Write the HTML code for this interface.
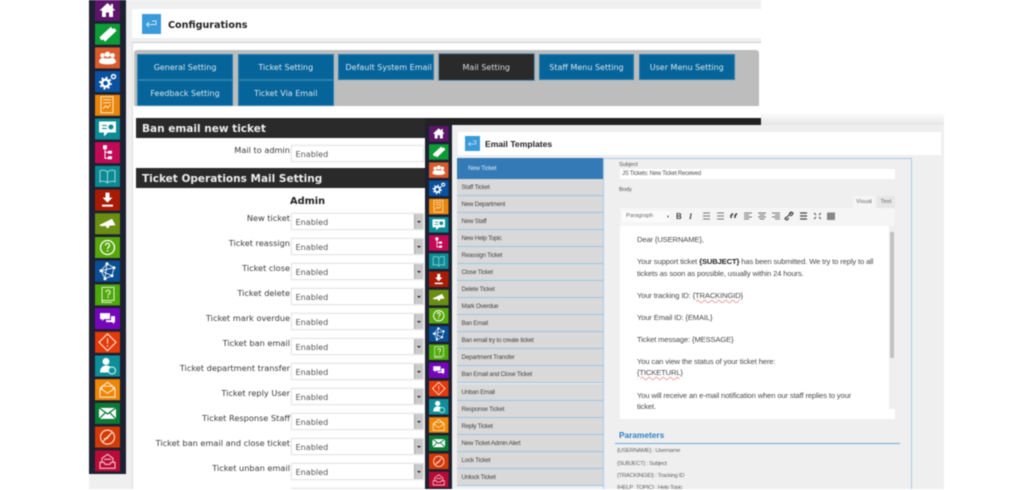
<!DOCTYPE html>
<html><head><meta charset="utf-8"><style>
html,body{margin:0;padding:0;background:#fff}
#p{position:relative;width:1024px;height:490px;overflow:hidden;background:#fff;filter:blur(.4px)}
#p div,#p span.a,#p svg.a{position:absolute}
.t{white-space:nowrap}
.v{font-family:"DejaVu Sans",sans-serif}
.l{font-family:"Liberation Sans",sans-serif}
.tab{background:#05649a;color:#d8e6ee;font:8px/27px "DejaVu Sans",sans-serif;text-align:center;height:26px;width:95.5px;box-shadow:inset 0 0 0 1px #2d7fae;white-space:nowrap;overflow:hidden}
.hd{left:136px;width:624px;height:20px;background:#2a2a2a;color:#eee;font:bold 10.5px/23px "DejaVu Sans",sans-serif;text-indent:6px;white-space:nowrap}
.lb{left:130px;width:160px;text-align:right;font:8.2px/12px "DejaVu Sans",sans-serif;color:#3a3a3a;white-space:nowrap}
.se{left:291px;width:131px;height:15px;background:#fff;border:1px solid #e6e6e6;box-shadow:0 0 1px #ddd;font:8.1px/16px "DejaVu Sans",sans-serif;color:#555;text-indent:3.5px}
.se i{position:absolute;right:0;top:0;width:8px;height:15px;background:#c9c9c9;border-left:1px solid #aaa}
.se i:after{content:"";position:absolute;left:2px;top:7px;border:2px solid transparent;border-top:2.5px solid #222}
.m{left:457px;width:146px;height:16px;background:#d9d9d9;border-bottom:1px solid #9cc4e4;font:6.2px/17.5px "Liberation Sans",sans-serif;letter-spacing:-.2px;color:#444;text-indent:4.5px;white-space:nowrap}
.e{left:637px;font:7.6px/11px "Liberation Sans",sans-serif;letter-spacing:-.13px;color:#4a4a4a;white-space:nowrap}
.q{left:617px;font:5.9px/8px "Liberation Sans",sans-serif;letter-spacing:-.3px;color:#666;white-space:nowrap}
u{text-decoration:underline wavy #e9a0a0 .4px}
</style></head><body><div id="p">
<svg width="0" height="0" style="position:absolute"><defs>
<symbol id="i0" viewBox="0 0 25 21"><path d="M12.500 3 4.500 10.500H7V17h4v-4.500h3V17h4v-6.500h2.500L18 8.200V4h-2v2.300z" fill="#fff"/></symbol>
<symbol id="i1" viewBox="0 0 25 21"><path d="M4.500 13.500 16 3l1.200 2.200 2.300-.7L21.500 7 10 18l-1.500-2.200-2.300.7z" fill="#fff"/></symbol>
<symbol id="i2" viewBox="0 0 25 21"><circle cx="7.500" cy="8" r="2.300" fill="#fff"/><circle cx="17.500" cy="8" r="2.300" fill="#fff"/><circle cx="12.500" cy="7" r="2.800" fill="#fff"/><path d="M4 15c0-3 2-4.500 3.500-4.500S10 11 12.500 11s3.500-.5 5-.5S21 12 21 15c-2 1.500-4 2-8.500 2S6 16.500 4 15z" fill="#fff"/></symbol>
<symbol id="i3" viewBox="0 0 25 21" fill="none" stroke="#fff"><circle cx="10.500" cy="12" r="3.500" stroke-width="2.500"/><circle cx="10.500" cy="12" r="5.500" stroke-width="1.800" stroke-dasharray="2 2.300"/><circle cx="18.500" cy="5.500" r="2" stroke-width="1.500"/></symbol>
<symbol id="i4" viewBox="0 0 25 21" fill="none" stroke="#ffe6c0"><path d="M6 2h12v16H6z"/><path d="M8 5h8M8 8h8M8 14l2.500-3 2 2 3-3"/></symbol>
<symbol id="i5" viewBox="0 0 25 21"><path d="M4 3h17v11h-8l-4 4v-4H4z" fill="#fff"/><path d="M7 7h5M7 10h5" stroke="#0c8b94"/><circle cx="16" cy="8.500" r="2.500" fill="#0c8b94"/></symbol>
<symbol id="i6" viewBox="0 0 25 21" fill="#fff"><path d="M8 3h4v4H8zM13 8.500h4v3h-4zM13 14h4v3h-4z"/><path d="M10 7v9h3M10 10h3" fill="none" stroke="#fff"/></symbol>
<symbol id="i7" viewBox="0 0 25 21" fill="none" stroke="#9fd8dc"><path d="M12.500 6C10 4 7 4 5 5v11c2-1 5-1 7.500 1 2.500-2 5.500-2 7.500-1V5c-2-1-5-1-7.500 1zM12.500 6v11"/></symbol>
<symbol id="i8" viewBox="0 0 25 21" fill="#fff"><path d="M10.500 3h4v5h3l-5 5-5-5h3zM7 15h11v2H7z"/></symbol>
<symbol id="i9" viewBox="0 0 25 21" fill="#fff"><path d="M4.500 11.500 8 10l9-4.500 3.500 6.500-6 .5-1 2.500-2.500-.5.500-1.800-5 .3-1.500-.5z"/></symbol>
<symbol id="i10" viewBox="0 0 25 21"><circle cx="12.500" cy="10.500" r="7" fill="none" stroke="#fff" stroke-width="1.300"/><path d="M10.500 8.500c0-3 4-3 4 0 0 1.500-2 1.500-2 3.500M12.500 13v1.500" fill="none" stroke="#fff" stroke-width="1.300"/></symbol>
<symbol id="i11" viewBox="0 0 25 21" fill="none" stroke="#fff" stroke-width=".8"><path d="M12 3 19 7 17 15 10 18 6 10zM12 3 10 18M6 10 17 15M19 7 6 10"/><g fill="#fff" stroke="none"><circle cx="12" cy="3" r="1.500"/><circle cx="19" cy="7" r="1.500"/><circle cx="17" cy="15" r="1.500"/><circle cx="10" cy="18" r="1.500"/><circle cx="6" cy="10" r="1.500"/></g></symbol>
<symbol id="i12" viewBox="0 0 25 21" fill="none" stroke="#dff0c8"><path d="M7 3h12v13H7zM7 16v2h10"/><path d="M11 8c0-3 4-3 4 0 0 1.500-2 1.500-2 3M13 12v1.500" stroke-width="1.300"/></symbol>
<symbol id="i13" viewBox="0 0 25 21" fill="#fff"><path d="M5 5h10v6H9l-2 2v-2H5z"/><path d="M16 8h4v6h-1v2l-2-2h-6v-2h5z"/></symbol>
<symbol id="i14" viewBox="0 0 25 21" fill="none" stroke="#ffd9c8" stroke-width="1.200"><path d="M12.500 2 21 10.500 12.500 19 4 10.500z"/><path d="M12.500 6.500v5.500M12.500 13.500v1.500"/></symbol>
<symbol id="i15" viewBox="0 0 25 21"><circle cx="11" cy="6" r="3.500" fill="#fff"/><path d="M5 17c0-5 3-7 6-7s4 1 5 2l-1 5z" fill="#fff"/><circle cx="17" cy="15" r="3.500" fill="#0f8e9a" stroke="#cfe" stroke-width="1"/></symbol>
<symbol id="i16" viewBox="0 0 25 21" fill="none" stroke="#ffe6c8" stroke-width="1.100"><path d="M5 9 12.500 3 20 9v9H5zM5 9l7.500 5L20 9M7 11V7h11v4"/></symbol>
<symbol id="i17" viewBox="0 0 25 21"><path d="M4 5h17v11H4z" fill="#fff"/><path d="M4 5l8.500 6L21 5M4 16l6-6M21 16l-6-6" fill="none" stroke="#0a7a35" stroke-width="1.300"/></symbol>
<symbol id="i18" viewBox="0 0 25 21" fill="none" stroke="#ffd9c8" stroke-width="1.200"><circle cx="12.500" cy="10.500" r="7"/><path d="M8 15 17 6M9 12h3l3-4"/></symbol>
<symbol id="i19" viewBox="0 0 25 21" fill="none" stroke="#f6c3cf" stroke-width="1.100"><path d="M5 12h4l1 2h5l1-2h4v6H5zM7 12V8l5.500-4L18 8v4M9 9h7"/></symbol>
</defs></svg>

<!-- main window -->
<div style="left:89px;top:0;width:672px;height:489px;background:#efefef"></div>
<div style="left:89px;top:0;width:37px;height:474px;background:#1d2030"></div>
<svg class="a" style="left:95px;top:0" width="25" height="474">
<rect y="0" width="25" height="21" fill="#5c1568"/><use href="#i0" y="0" width="25" height="21"/>
<rect y="23.700" width="25" height="21" fill="#0d9a37"/><use href="#i1" y="23.700" width="25" height="21"/>
<rect y="47.400" width="25" height="21" fill="#d95a2b"/><use href="#i2" y="47.400" width="25" height="21"/>
<rect y="71.100" width="25" height="21" fill="#0a519f"/><use href="#i3" y="71.100" width="25" height="21"/>
<rect y="94.800" width="25" height="21" fill="#e8860c"/><use href="#i4" y="94.800" width="25" height="21"/>
<rect y="118.500" width="25" height="21" fill="#0c8b94"/><use href="#i5" y="118.500" width="25" height="21"/>
<rect y="142.200" width="25" height="21" fill="#c20a56"/><use href="#i6" y="142.200" width="25" height="21"/>
<rect y="165.900" width="25" height="21" fill="#0c8a93"/><use href="#i7" y="165.900" width="25" height="21"/>
<rect y="189.600" width="25" height="21" fill="#a81b05"/><use href="#i8" y="189.600" width="25" height="21"/>
<rect y="213.300" width="25" height="21" fill="#6a8e12"/><use href="#i9" y="213.300" width="25" height="21"/>
<rect y="237" width="25" height="21" fill="#56a60c"/><use href="#i10" y="237" width="25" height="21"/>
<rect y="260.700" width="25" height="21" fill="#0a4f94"/><use href="#i11" y="260.700" width="25" height="21"/>
<rect y="284.400" width="25" height="21" fill="#4ea80c"/><use href="#i12" y="284.400" width="25" height="21"/>
<rect y="308.100" width="25" height="21" fill="#7606bc"/><use href="#i13" y="308.100" width="25" height="21"/>
<rect y="331.800" width="25" height="21" fill="#e23a0a"/><use href="#i14" y="331.800" width="25" height="21"/>
<rect y="355.500" width="25" height="21" fill="#0f8e9a"/><use href="#i15" y="355.500" width="25" height="21"/>
<rect y="379.200" width="25" height="21" fill="#ee8606"/><use href="#i16" y="379.200" width="25" height="21"/>
<rect y="402.900" width="25" height="21" fill="#0a7a35"/><use href="#i17" y="402.900" width="25" height="21"/>
<rect y="426.600" width="25" height="21" fill="#d23a08"/><use href="#i18" y="426.600" width="25" height="21"/>
<rect y="450.300" width="25" height="21" fill="#b80c36"/><use href="#i19" y="450.300" width="25" height="21"/>
</svg>

<div style="left:132px;top:9px;width:629px;height:29px;background:#fff"></div>
<div style="left:142px;top:14px;width:19px;height:20px;background:#3a9ad9"></div>
<svg class="a" style="left:142px;top:14px" width="19" height="20" fill="none" stroke="#cfe6f6" stroke-width=".9"><path d="M4.500 10.500 7 8M4.500 10.500 7 13M4.500 10.500H14V7H10"/></svg>
<div class="t v" style="left:168px;top:18px;font-weight:bold;font-size:9.600px;line-height:15px;color:#222">Configurations</div>

<div style="left:132px;top:42px;width:628px;height:447px;background:#fff;border-top:1px solid #ccc;border-left:1px solid #ddd"></div>
<div style="left:134px;top:50px;width:625px;height:56px;background:#bdbdbd;border-radius:3px 3px 0 0"></div>
<div class="tab" style="left:137.300px;top:54px">General Setting</div>
<div class="tab" style="left:238px;top:54px">Ticket Setting</div>
<div class="tab" style="left:338px;top:54px;text-align:left;text-indent:7.500px">Default System Email</div>
<div class="tab" style="left:438.500px;top:54px;background:#2a2a2a;box-shadow:0 0 0 1px #6d9cc0;color:#ddd;line-height:28px">Mail Setting</div>
<div class="tab" style="left:538.700px;top:54px">Staff Menu Setting</div>
<div class="tab" style="left:639px;top:54px">User Menu Setting</div>
<div class="tab" style="left:137.300px;top:80px">Feedback Setting</div>
<div class="tab" style="left:238px;top:80px">Ticket Via Email</div>

<div class="hd" style="top:118px">Ban email new ticket</div>
<div class="lb" style="top:144px">Mail to admin</div><div class="se" style="top:145px">Enabled</div>
<div class="hd" style="top:168px">Ticket Operations Mail Setting</div>
<div class="t v" style="left:290px;top:195px;font-weight:bold;font-size:9.800px;line-height:13px;color:#222">Admin</div>

<div class="lb" style="top:212px">New ticket</div><div class="se" style="top:213px">Enabled<i></i></div>
<div class="lb" style="top:237px">Ticket reassign</div><div class="se" style="top:238px">Enabled<i></i></div>
<div class="lb" style="top:262px">Ticket close</div><div class="se" style="top:263px">Enabled<i></i></div>
<div class="lb" style="top:287px">Ticket delete</div><div class="se" style="top:288px">Enabled<i></i></div>
<div class="lb" style="top:312px">Ticket mark overdue</div><div class="se" style="top:313px">Enabled<i></i></div>
<div class="lb" style="top:337px">Ticket ban email</div><div class="se" style="top:338px">Enabled<i></i></div>
<div class="lb" style="top:362px">Ticket department transfer</div><div class="se" style="top:363px">Enabled<i></i></div>
<div class="lb" style="top:387px">Ticket reply User</div><div class="se" style="top:388px">Enabled<i></i></div>
<div class="lb" style="top:412px">Ticket Response Staff</div><div class="se" style="top:413px">Enabled<i></i></div>
<div class="lb" style="top:437px">Ticket ban email and close ticket</div><div class="se" style="top:438px">Enabled<i></i></div>
<div class="lb" style="top:462px">Ticket unban email</div><div class="se" style="top:463px">Enabled<i></i></div>
<div class="se" style="top:488px"></div>

<!-- overlay window -->
<div style="left:760px;top:112px;width:184px;height:13px;background:linear-gradient(#fff,#e6e6e6)"></div>
<div style="left:424.500px;top:118px;width:336px;height:7px;background:#222"></div>
<div style="left:452px;top:125px;width:492px;height:364px;background:#efefef"></div>
<div style="left:424.500px;top:125px;width:27.500px;height:364px;background:#1d2030"></div>
<svg class="a" style="left:429px;top:126px" width="19.500" height="363">
<rect y="0" width="19.500" height="15.500" fill="#5c1568"/><use href="#i0" y="0" width="19.500" height="15.500"/>
<rect y="18.200" width="19.500" height="15.500" fill="#0d9a37"/><use href="#i1" y="18.200" width="19.500" height="15.500"/>
<rect y="36.400" width="19.500" height="15.500" fill="#d95a2b"/><use href="#i2" y="36.400" width="19.500" height="15.500"/>
<rect y="54.600" width="19.500" height="15.500" fill="#0a519f"/><use href="#i3" y="54.600" width="19.500" height="15.500"/>
<rect y="72.800" width="19.500" height="15.500" fill="#e8860c"/><use href="#i4" y="72.800" width="19.500" height="15.500"/>
<rect y="91" width="19.500" height="15.500" fill="#0c8b94"/><use href="#i5" y="91" width="19.500" height="15.500"/>
<rect y="109.200" width="19.500" height="15.500" fill="#c20a56"/><use href="#i6" y="109.200" width="19.500" height="15.500"/>
<rect y="127.400" width="19.500" height="15.500" fill="#0c8a93"/><use href="#i7" y="127.400" width="19.500" height="15.500"/>
<rect y="145.600" width="19.500" height="15.500" fill="#a81b05"/><use href="#i8" y="145.600" width="19.500" height="15.500"/>
<rect y="163.800" width="19.500" height="15.500" fill="#6a8e12"/><use href="#i9" y="163.800" width="19.500" height="15.500"/>
<rect y="182" width="19.500" height="15.500" fill="#56a60c"/><use href="#i10" y="182" width="19.500" height="15.500"/>
<rect y="200.200" width="19.500" height="15.500" fill="#0a4f94"/><use href="#i11" y="200.200" width="19.500" height="15.500"/>
<rect y="218.400" width="19.500" height="15.500" fill="#4ea80c"/><use href="#i12" y="218.400" width="19.500" height="15.500"/>
<rect y="236.600" width="19.500" height="15.500" fill="#7606bc"/><use href="#i13" y="236.600" width="19.500" height="15.500"/>
<rect y="254.800" width="19.500" height="15.500" fill="#e23a0a"/><use href="#i14" y="254.800" width="19.500" height="15.500"/>
<rect y="273" width="19.500" height="15.500" fill="#0f8e9a"/><use href="#i15" y="273" width="19.500" height="15.500"/>
<rect y="291.200" width="19.500" height="15.500" fill="#ee8606"/><use href="#i16" y="291.200" width="19.500" height="15.500"/>
<rect y="309.400" width="19.500" height="15.500" fill="#0a7a35"/><use href="#i17" y="309.400" width="19.500" height="15.500"/>
<rect y="327.600" width="19.500" height="15.500" fill="#d23a08"/><use href="#i18" y="327.600" width="19.500" height="15.500"/>
<rect y="345.800" width="19.500" height="15.500" fill="#b80c36"/><use href="#i19" y="345.800" width="19.500" height="15.500"/>
</svg>

<div style="left:458px;top:132px;width:483px;height:23px;background:#fff"></div>
<div style="left:465px;top:136px;width:15px;height:15px;background:#3a9ad9"></div>
<svg class="a" style="left:465px;top:136px" width="15" height="15" fill="none" stroke="#cfe6f6" stroke-width=".7"><path d="M3.500 8 5.500 6M3.500 8 5.500 10M3.500 8H11V5H8"/></svg>
<div class="t l" style="left:485px;top:138px;font-weight:bold;font-size:8.600px;line-height:12px;color:#222">Email Templates</div>

<div style="left:457px;top:157.500px;width:146px;height:21.500px;background:#337ab7;color:#dce9f4;font:6.200px/21px 'Liberation Sans',sans-serif;letter-spacing:-.2px;text-indent:11px">New Ticket</div>
<div class="m" style="top:179px">Staff Ticket</div>
<div class="m" style="top:196px">New Department</div>
<div class="m" style="top:213px">New Staff</div>
<div class="m" style="top:230px">New Help Topic</div>
<div class="m" style="top:247px">Reassign Ticket</div>
<div class="m" style="top:264px">Close Ticket</div>
<div class="m" style="top:281.200px">Delete Ticket</div>
<div class="m" style="top:298.200px">Mark Overdue</div>
<div class="m" style="top:315.300px">Ban Email</div>
<div class="m" style="top:332.300px">Ban email try to create ticket</div>
<div class="m" style="top:349.400px">Department Transfer</div>
<div class="m" style="top:366.400px">Ban Email and Close Ticket</div>
<div class="m" style="top:383.500px">Unban Email</div>
<div class="m" style="top:400.500px">Response Ticket</div>
<div class="m" style="top:417.500px">Reply Ticket</div>
<div class="m" style="top:434.500px">New Ticket Admin Alert</div>
<div class="m" style="top:451.500px">Lock Ticket</div>
<div class="m" style="top:468.500px">Unlock Ticket</div>

<div style="left:603px;top:157.500px;width:309px;height:332px;border-left:1px solid #a9cbe8;border-right:1px solid #a9cbe8;border-top:1px solid #a9cbe8;box-sizing:border-box;background:#efefef"></div>
<div class="t l" style="left:619px;top:162px;font-size:5.800px;line-height:7px;letter-spacing:-.1px;color:#555">Subject</div>
<div class="t l" style="left:620px;top:169px;width:275px;height:10px;background:#fff;font-size:6px;line-height:10px;letter-spacing:-.25px;color:#555;text-indent:2px">JS Tickets: New Ticket Received</div>
<div class="t l" style="left:619px;top:186.500px;font-size:5.800px;line-height:7px;letter-spacing:-.1px;color:#555">Body</div>
<div class="l" style="left:853px;top:196px;width:22px;height:12px;background:#f5f5f5;font-size:5.800px;line-height:12px;color:#666;text-align:center">Visual</div>
<div class="l" style="left:877px;top:196px;width:18px;height:12px;background:#e6e6e6;font-size:5.800px;line-height:12px;color:#666;text-align:center">Text</div>
<div style="left:620px;top:207.500px;width:275px;height:18.500px;background:#f5f5f5"></div>
<div class="t l" style="left:622px;top:211px;width:48px;height:11px;background:#fbfbfb;font-size:5.800px;line-height:11px;color:#666;text-indent:4px">Paragraph<span style="position:absolute;left:40px;top:0;font-size:4px">▼</span></div>
<div class="t l" style="left:676px;top:211px;font-weight:bold;font-size:8px;line-height:11px;color:#444">B</div>
<div class="t" style="left:689px;top:211px;font:italic bold 8px/11px 'Liberation Serif',serif;color:#444">I</div>
<svg class="a" style="left:700px;top:210px" width="140" height="12" fill="none" stroke="#777" stroke-width=".9">
<path d="M3 3h7M3 6h7M3 9h7M17 3h7M17 6h7M17 9h7"/>
<path d="M31 8V5.500l2-2M35 8V5.500l2-2" stroke-width="1.600" stroke="#444"/>
<path d="M44 3h8M44 5h5M44 7h8M44 9h5M58 3h8M59.500 5h5M58 7h8M59.500 9h5M72 3h8M75 5h5M72 7h8M75 9h5"/>
<path d="M86 8l5-5M86 7l-1 2 2 1 2-2M89 4l2-2 2 1-1 2-2 1" stroke="#444" stroke-width="1.200"/>
<path d="M100 3h7M100 6h7M100 9h7" stroke="#444" stroke-width="1.300"/>
<path d="M114 3l2 2M121 3l-2 2M114 9l2-2M121 9l-2-2" stroke="#444"/>
<rect x="127" y="2.500" width="8" height="7.500" fill="#888" stroke="none"/>
</svg>
<div style="left:620px;top:226px;width:275px;height:193px;background:#fff"></div>
<div style="left:889px;top:226px;width:6px;height:183px;background:#eee"></div>
<div style="left:890px;top:232px;width:4px;height:126px;background:#c2c2c2"></div>
<div class="e" style="top:233.500px">Dear {USERNAME},</div>
<div class="e" style="top:256px">Your support ticket <b style="color:#222">{SUBJECT}</b> has been submitted. We try to reply to all</div>
<div class="e" style="top:267.500px">tickets as soon as possible, usually within 24 hours.</div>
<div class="e" style="top:290px">Your tracking ID: <u>{TRACKINGID}</u></div>
<div class="e" style="top:311.500px">Your Email ID: {EMAIL}</div>
<div class="e" style="top:333.500px">Ticket message: {MESSAGE}</div>
<div class="e" style="top:355.500px">You can view the status of your ticket here:</div>
<div class="e" style="top:367px"><u>{TICKETURL}</u></div>
<div class="e" style="top:389.500px">You will receive an e-mail notification when our staff replies to your</div>
<div class="e" style="top:401px">ticket.</div>
<div class="t l" style="left:619px;top:430px;font-weight:bold;font-size:8.300px;line-height:11px;color:#2f7fc0">Parameters</div>
<div style="left:615px;top:443px;width:285px;height:1px;background:#6fa8d6"></div>
<div class="q" style="top:447px">{USERNAME} : Username</div>
<div class="q" style="top:459.500px">{SUBJECT} : Subject</div>
<div class="q" style="top:472px">{TRACKINGID} : Tracking ID</div>
<div class="q" style="top:484px">{HELP_TOPIC} : Help Topic</div>
<div style="left:0;top:489px;width:1024px;height:1px;background:#fff"></div>
</div></body></html>
